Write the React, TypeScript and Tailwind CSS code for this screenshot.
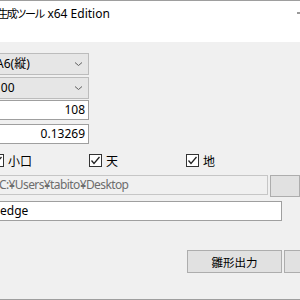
import React from "react";

const Chevron = () => (
  <svg width="9" height="6" viewBox="0 0 9 6" className="shrink-0">
    <path d="M1 1.5 L4.5 4.5 L8 1.5" fill="none" stroke="#606060" strokeWidth="1" />
  </svg>
);

function Combo({ value, pad }: { value: string; pad: string }) {
  return (
    <div className="ml-[-8px] w-[97px] h-[22px] flex items-center justify-between bg-[#e6e6e6] border border-[#bcbcbc] pr-[5px]">
      <span className={pad}>{value}</span>
      <Chevron />
    </div>
  );
}

function NumBox({ value }: { value: string }) {
  return (
    <div className="ml-[-8px] w-[97px] h-[20px] flex items-center justify-end bg-white border border-[#9f9f9f] pr-[3px]">
      {value}
    </div>
  );
}

function Check({ label, className }: { label: string; className?: string }) {
  return (
    <div className={"flex items-center gap-[4px] " + (className ?? "")}>
      <div className="w-[13px] h-[13px] bg-white border border-[#333] flex items-center justify-center">
        <svg width="11" height="11" viewBox="0 0 11 11">
          <path d="M1.5 5.5 L4 8.5 L9.5 2" fill="none" stroke="#222" strokeWidth="1.3" />
        </svg>
      </div>
      <span className="font-['Noto_Sans_CJK_JP',sans-serif] text-[12px]">{label}</span>
    </div>
  );
}

export default function App() {
  return (
    <div className="w-[300px] h-[300px] overflow-hidden flex flex-col bg-[#f0f0f0] border-t border-b border-[#9e9e9e] text-[12px] leading-[16px] text-black font-['Noto_Sans','Noto_Sans_CJK_JP',sans-serif]">
      {/* title bar */}
      <div className="h-[41px] shrink-0 bg-white relative pt-[4px]">
        <div className="ml-[-21px] flex items-baseline whitespace-nowrap">
          <span className="font-['Noto_Sans_CJK_JP',sans-serif] text-[11px] tracking-[-1.8px]">雛形生成ツール</span>
          <span className="ml-[4px] text-[12px]">x64 Edition</span>
        </div>
        <div className="absolute right-0 top-[11px] w-[3px] h-[2px] bg-[#9a9a9a]" />
      </div>

      {/* body */}
      <div className="flex-1 flex flex-col">
        <div className="mt-[11px]">
          <Combo value="A6(縦)" pad="pl-[3px]" />
        </div>
        <div className="mt-[2px]">
          <Combo value="100" pad="pl-[1px]" />
        </div>
        <div className="mt-[1px]">
          <NumBox value="108" />
        </div>
        <div className="mt-[4px]">
          <NumBox value="0.13269" />
        </div>

        <div className="mt-[10px] h-[13px] flex items-center ml-[-9px]">
          <Check label="小口" className="w-[98px]" />
          <Check label="天" className="w-[97px]" />
          <Check label="地" />
        </div>

        <div className="mt-[8px] flex items-start gap-[2px] ml-[-8px]">
          <div className="w-[290px] h-[20px] flex items-center bg-[#f0f0f0] border border-[#c6c6c6] pl-[6px] text-[#6d6d6d] whitespace-nowrap tracking-[-0.6px]">
            C:¥Users¥tabito¥Desktop
          </div>
          <div className="w-[30px] h-[22px] shrink-0 bg-[#e1e1e1] border border-[#adadad]" />
        </div>

        <div className="mt-[4px] ml-[-8px] w-[290px] h-[20px] flex items-center bg-white border border-[#9f9f9f] pl-[7px]">
          edge
        </div>

        <div className="mt-[29px] flex gap-[2px] ml-[187px]">
          <div className="w-[95px] h-[23px] shrink-0 flex items-center justify-center bg-[#e1e1e1] border border-[#adadad] font-['Noto_Sans_CJK_JP',sans-serif] text-[11.5px]">
            雛形出力
          </div>
          <div className="w-[30px] h-[23px] shrink-0 bg-[#e1e1e1] border border-[#adadad]" />
        </div>
      </div>
    </div>
  );
}
